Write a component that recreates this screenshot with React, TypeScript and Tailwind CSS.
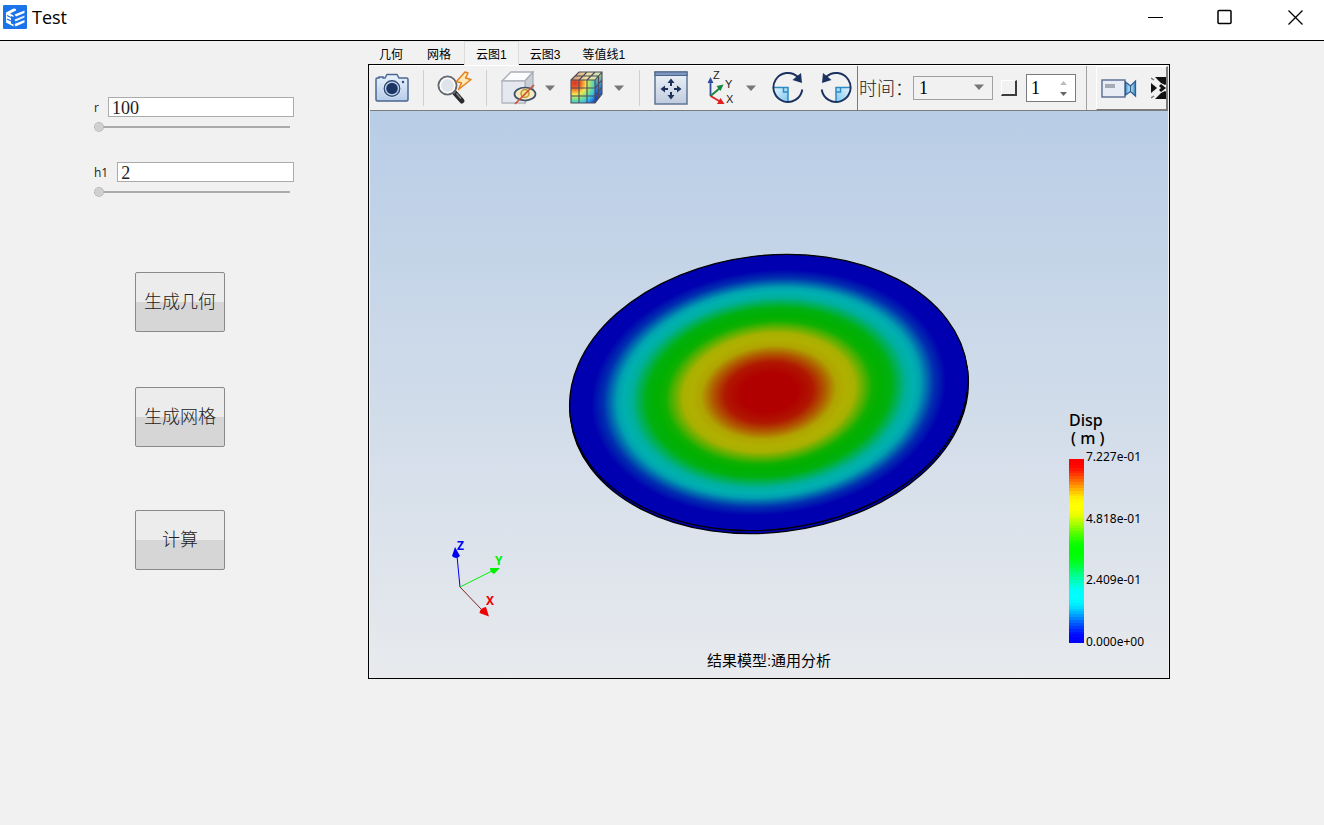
import React from 'react';

const tabs = ['几何', '网格', '云图1', '云图3', '等值线1'];

const legendLabels = ['7.227e-01', '4.818e-01', '2.409e-01', '0.000e+00'];

const AppLogo = () => (
  <svg width="24" height="24" viewBox="0 0 24 24" fill="none">
    <rect width="24" height="24" rx="1" fill="#1a73e8" />
    <path d="M3 7.500 10.500 3.500 13 4V5.500L7 8.500 10.500 10.500V12L8 11V18.500L10.500 19.500V21.500L3 17.500Z" fill="#fff" />
    <path d="M4 10.500 8 12.500M4 14 8 16" stroke="#1a73e8" strokeWidth="1.300" />
    <path d="M11.500 9.500 21.500 5.500V8L13 11.500Z" fill="#fff" />
    <path d="M11.500 14.500 21.500 10.500V12.500L12.500 16.500Z" fill="#e6effc" />
    <path d="M11.500 19 21.500 15V17.500L12.500 21.500Z" fill="#fff" />
  </svg>
);

const CameraIcon = () => (
  <svg width="34" height="30" viewBox="0 0 34 30">
    <defs>
      <linearGradient id="cam" x1="0" y1="0" x2="0" y2="1">
        <stop offset="0" stopColor="#e9f3fd" />
        <stop offset="1" stopColor="#b5cce8" />
      </linearGradient>
    </defs>
    <path d="M2 5H4V4H8V5H10L12 1.500H22L24 5H31.500Q33 5 33 6.500V26.500Q33 28 31.500 28H2.500Q1 28 1 26.500V6.500Q1 5 2 5Z" fill="url(#cam)" stroke="#4b6791" strokeWidth="1.500" />
    <circle cx="17" cy="15.500" r="9" fill="#f4f9ff" />
    <circle cx="17" cy="15.500" r="7.800" fill="#c7daf0" stroke="#2f4b76" strokeWidth="1.400" />
    <circle cx="17" cy="15.500" r="5.800" fill="#1c3562" />
    <circle cx="28" cy="9" r="1.200" fill="#2f4b76" />
  </svg>
);

const QuickFindIcon = () => (
  <svg width="36" height="34" viewBox="0 0 36 34">
    <path d="M17 21 25 30" stroke="#2b2b2e" strokeWidth="5" strokeLinecap="round" />
    <path d="M19.500 22.500 24 27.500" stroke="#8d9095" strokeWidth="1.200" />
    <path d="M15 19 18 22" stroke="#77797d" strokeWidth="2.500" />
    <circle cx="10.500" cy="14.500" r="9" fill="#dfe4ea" stroke="#65686d" strokeWidth="2" />
    <circle cx="10.500" cy="14.500" r="7.200" fill="none" stroke="#fbfcfe" strokeWidth="1.500" />
    <path d="M28 1 19.500 10.500 24.500 12 21.500 18.500 34 8.500 28.500 7 31 2Z" fill="#fde9b5" stroke="#e5811d" strokeWidth="1.500" strokeLinejoin="round" />
  </svg>
);

const HiddenCubeIcon = () => (
  <svg width="36" height="34" viewBox="0 0 36 34">
    <path d="M1 10 10 1H32L24 10Z" fill="#fbfcfe" stroke="#a9adb6" strokeWidth="1.300" />
    <path d="M24 10 32 1V22L24 32Z" fill="#c9cdd6" stroke="#a9adb6" strokeWidth="1.300" />
    <path d="M1 10H24V32H1Z" fill="#e5e8ee" stroke="#b1b5be" strokeWidth="1.300" />
    <ellipse cx="24" cy="23" rx="10.500" ry="6.500" fill="#f7e9bd" stroke="#3c4f6d" strokeWidth="1.700" />
    <circle cx="24" cy="22.500" r="4" fill="#f5df8e" stroke="#bc9638" strokeWidth="1.500" />
    <path d="M14 33 33 14" stroke="#cf4a2c" strokeWidth="1.600" />
  </svg>
);

const ContourCubeIcon = () => (
  <svg width="34" height="34" viewBox="0 0 34 34">
    <defs>
      <radialGradient id="front" gradientUnits="userSpaceOnUse" cx="5" cy="12" r="27">
        <stop offset="0" stopColor="#d93226" />
        <stop offset=".22" stopColor="#f16a27" />
        <stop offset=".42" stopColor="#f4e84b" />
        <stop offset=".62" stopColor="#74df93" />
        <stop offset=".78" stopColor="#36bfea" />
        <stop offset="1" stopColor="#1647d8" />
      </radialGradient>
      <linearGradient id="side" x1="0" y1="0" x2="0" y2="1">
        <stop offset="0" stopColor="#a9d86c" />
        <stop offset=".5" stopColor="#2c7ed8" />
        <stop offset="1" stopColor="#102fae" />
      </linearGradient>
      <linearGradient id="lid" x1="0" y1="0" x2="1" y2="0">
        <stop offset="0" stopColor="#d98a6a" />
        <stop offset=".5" stopColor="#ede0a0" />
        <stop offset="1" stopColor="#c4e2b4" />
      </linearGradient>
    </defs>
    <path d="M1 9 9 1H32L25 9Z" fill="url(#lid)" />
    <path d="M25 9 32 1V23L25 32Z" fill="url(#side)" />
    <path d="M1 9H25V32H1Z" fill="url(#front)" />
    <path
      d="M1 9 9 1H32V23L25 32H1ZM1 9H25V32M25 9 32 1M9 9V32M17 9V32M1 17H25L32 9M1 25H25L32 16M9 9 17 1M17 9 25 1M5 5H28.500V27.500"
      fill="none"
      stroke="#4c4c5c"
      strokeWidth="1.100"
    />
  </svg>
);

const FitIcon = () => (
  <svg width="34" height="34" viewBox="0 0 34 34">
    <defs>
      <linearGradient id="fit" x1="0" y1="0" x2="0" y2="1">
        <stop offset="0" stopColor="#eef2f8" />
        <stop offset="1" stopColor="#bfcbde" />
      </linearGradient>
    </defs>
    <rect x="1" y="1" width="32" height="32" fill="url(#fit)" stroke="#5f7493" strokeWidth="1.500" />
    <rect x="1" y="1" width="32" height="3.500" fill="#7d97c0" stroke="#4d648c" />
    <path d="M17 9V15M17 21V27M8 18H14M20 18H26" stroke="#1c3058" strokeWidth="2" />
    <path d="M17 7.500 13.500 12H20.500ZM17 28.500 13.500 24H20.500ZM6.500 18 11 14.500V21.500ZM27.500 18 23 14.500V21.500Z" fill="#1c3058" />
  </svg>
);

const AxesIcon = () => (
  <svg width="30" height="36" viewBox="0 0 30 36" className="overflow-visible">
    <path d="M4.500 26V10" stroke="#2e4fa0" strokeWidth="1.800" />
    <path d="M4.500 7 1.500 13H7.500Z" fill="#2e4fa0" />
    <path d="M4.500 26 14 18" stroke="#16863c" strokeWidth="1.800" />
    <path d="M17.500 14.500 10.500 16 14.500 21Z" fill="#16863c" />
    <path d="M4.500 26 14 31.500" stroke="#e31e1e" strokeWidth="1.800" />
    <path d="M18.500 34 14.500 28 11 34Z" fill="#e31e1e" />
    <g className="font-['Liberation_Sans'] text-[11px]" fill="#222">
      <text x="7" y="9">Z</text>
      <text x="19" y="18">Y</text>
      <text x="20" y="33">X</text>
    </g>
  </svg>
);

const RotateIcon = ({ flip = false }: { flip?: boolean }) => (
  <svg width="32" height="34" viewBox="0 0 32 34">
    <defs>
      <linearGradient id="quad" x1="0" y1="0" x2="1" y2="1">
        <stop offset="0" stopColor="#e6f6fe" />
        <stop offset="1" stopColor="#7cc6ee" />
      </linearGradient>
    </defs>
    <g transform={flip ? 'translate(32 0) scale(-1 1)' : undefined}>
      <path d="M1.500 16.500H16V31A14.500 14.500 0 0 1 1.500 16.500Z" fill="url(#quad)" />
      <path d="M1.500 16.500H16V31M11.500 17V21H16" fill="none" stroke="#2c8bc4" strokeWidth="1.500" />
      <path d="M26 6A14.500 14.500 0 1 0 30.300 18.500" fill="none" stroke="#1b315f" strokeWidth="1.900" />
      <path d="M29 2 30 12 20.500 9Z" fill="#1b315f" />
    </g>
  </svg>
);

const VideoIcon = () => (
  <svg width="36" height="20" viewBox="0 0 36 20">
    <defs>
      <linearGradient id="lens" x1="0" y1="0" x2="1" y2="0">
        <stop offset="0" stopColor="#4b9bd0" />
        <stop offset=".5" stopColor="#d8f0fc" />
        <stop offset="1" stopColor="#3181bd" />
      </linearGradient>
    </defs>
    <rect x="1" y="2" width="23" height="17" fill="#e8ecf4" stroke="#566b91" strokeWidth="1.400" />
    <rect x="4" y="6" width="10" height="4" fill="#a3abb7" />
    <path d="M24.500 4 29.500 8 34.500 3V18L29.500 13.500 24.500 17Z" fill="url(#lens)" stroke="#2b5f95" strokeWidth="1.300" />
    <path d="M29.500 8V13.500" stroke="#2b5f95" strokeWidth="1.300" />
  </svg>
);

const PlayIcon = () => (
  <svg width="20" height="22" viewBox="0 0 20 22">
    <path d="M0 6 6 11 0 16Z" fill="#111" />
    <path d="M4 0H20V4L14 8 10 6ZM4 22H20V18L14 14 10 16Z" fill="#111" />
    <path d="M10 7 15 11 10 15 8 13 10 11 8 9Z" fill="#111" />
    <path d="M0 1 3 3M0 21 3 19" stroke="#777" strokeWidth="1.500" />
  </svg>
);

const Caret = () => (
  <svg width="10" height="6" viewBox="0 0 10 6">
    <path d="M0 0.500H10L5 6Z" fill="#777" />
  </svg>
);

type ToolProps = { label: string; className?: string; children: React.ReactNode };

const Tool = ({ label, className = '', children }: ToolProps) => (
  <button type="button" aria-label={label} className={`flex h-9 shrink-0 items-center justify-center ${className}`}>
    {children}
  </button>
);

const Divider = ({ className = '' }: { className?: string }) => (
  <div className={`h-9 w-px shrink-0 bg-[#d0d0d0] ${className}`} />
);

const Toolbar = () => (
  <div className="flex h-[46px] items-center overflow-hidden border-t border-b border-t-white border-b-[#7b7b7b] bg-[#f1f1f1] pl-[5px]">
    <Tool label="截图"><CameraIcon /></Tool>
    <Divider className="mr-[13px] ml-[14px]" />
    <Tool label="快速查询"><QuickFindIcon /></Tool>
    <Divider className="mr-[14px] ml-[13px]" />
    <Tool label="隐藏"><HiddenCubeIcon /></Tool>
    <Tool label="隐藏选项" className="ml-2"><Caret /></Tool>
    <Tool label="云图" className="ml-[15px]"><ContourCubeIcon /></Tool>
    <Tool label="云图选项" className="ml-[10px]"><Caret /></Tool>
    <Divider className="ml-[15px]" />
    <Tool label="适应窗口" className="ml-[14px]"><FitIcon /></Tool>
    <Tool label="视角" className="ml-[18px]"><AxesIcon /></Tool>
    <Tool label="视角选项" className="ml-[10px]"><Caret /></Tool>
    <Tool label="顺时针旋转" className="ml-4"><RotateIcon /></Tool>
    <Tool label="逆时针旋转" className="ml-4"><RotateIcon flip /></Tool>
    <div className="ml-[5px] h-full w-px shrink-0 bg-[#7b7b7b]" />

    <label htmlFor="time" className="w-[55px] shrink-0 overflow-hidden pt-0.5 pl-px text-lg leading-6 font-light whitespace-nowrap text-[#222]">
      时间：
    </label>
    <div className="relative shrink-0">
      <select
        id="time"
        defaultValue="1"
        className="block h-6 w-20 appearance-none border border-[#a0a0a0] bg-[#f1f1f1] pl-[5px] font-['Liberation_Serif',serif] text-lg leading-5 text-black"
      >
        <option value="1">1</option>
      </select>
      <span className="pointer-events-none absolute top-2 right-[9px]"><Caret /></span>
    </div>
    <input
      type="checkbox"
      aria-label="循环"
      className="ml-2 size-4 shrink-0 appearance-none border-t border-r-2 border-b-2 border-l border-t-white border-r-[#3c3c3c] border-b-[#3c3c3c] border-l-white bg-[#f1f1f1]"
    />
    <div className="ml-[9px] flex h-7 w-[50px] shrink-0 items-center border border-[#7b7b7b] bg-white">
      <input
        type="number"
        aria-label="步长"
        defaultValue={1}
        className="w-8 min-w-0 appearance-none bg-transparent pl-1 font-['Liberation_Serif',serif] text-lg leading-6 text-black outline-none [&::-webkit-inner-spin-button]:appearance-none"
      />
      <div className="flex flex-col gap-[7px]">
        <button type="button" aria-label="增加">
          <svg width="9" height="4" viewBox="0 0 7 4" className="block"><path d="M3.500 0 7 4H0Z" fill="#bdbdbd" /></svg>
        </button>
        <button type="button" aria-label="减少">
          <svg width="9" height="4" viewBox="0 0 7 4" className="block"><path d="M0 0H7L3.500 4Z" fill="#666" /></svg>
        </button>
      </div>
    </div>
    <div className="ml-[10px] h-full w-px shrink-0 bg-[#a0a0a0]" />
    <div className="ml-[9px] flex h-full min-w-0 flex-1 items-center overflow-hidden border-t border-r-2 border-b border-l border-t-white border-r-[#7b7b7b] border-b-[#7b7b7b] border-l-white pl-1">
      <Tool label="录像"><VideoIcon /></Tool>
      <Tool label="播放" className="ml-[14px]"><PlayIcon /></Tool>
    </div>
  </div>
);

const Disc = () => (
  <svg width="404" height="284" viewBox="-202 -142 404 284" className="absolute top-[141px] left-1/2 -translate-x-1/2">
    <defs>
      <radialGradient id="disp">
        <stop offset="0" stopColor="#b00000" />
        <stop offset=".14" stopColor="#b00000" />
        <stop offset=".22" stopColor="#b01800" />
        <stop offset=".28" stopColor="#b05800" />
        <stop offset=".34" stopColor="#b0a400" />
        <stop offset=".39" stopColor="#b0b000" />
        <stop offset=".43" stopColor="#a8b000" />
        <stop offset=".52" stopColor="#10b000" />
        <stop offset=".56" stopColor="#00b000" />
        <stop offset=".61" stopColor="#00b010" />
        <stop offset=".69" stopColor="#00b09c" />
        <stop offset=".73" stopColor="#00b0b0" />
        <stop offset=".76" stopColor="#00a0b0" />
        <stop offset=".83" stopColor="#0030b0" />
        <stop offset=".89" stopColor="#0000b0" />
        <stop offset="1" stopColor="#0000b0" />
      </radialGradient>
    </defs>
    <g stroke="#000" strokeWidth="1.300">
      <ellipse rx="200" ry="137" cy="1.500" transform="rotate(-7)" fill="#0000b0" />
      <ellipse rx="200" ry="137" cy="-1.500" transform="rotate(-7)" fill="url(#disp)" />
    </g>
  </svg>
);

const Triad = () => (
  <svg width="70" height="90" viewBox="450 530 70 90" className="absolute bottom-[58px] left-20 overflow-visible">
    <path d="M460 587 457 556" stroke="#0000f0" />
    <path d="M455 547 452 556 Q456 560 460 556Z" fill="#0000f0" />
    <path d="M460 587 492 571" stroke="#00f000" />
    <path d="M500 568 490 568 Q490 572 494 574Z" fill="#00f000" />
    <path d="M460 587 482 610" stroke="#802020" />
    <path d="M489 616.500 486 607 Q480 608 479.500 613Z" fill="#f00000" />
    <g className="font-['Noto_Sans'] text-xs font-bold">
      <text x="457" y="550" fill="#0000f0">Z</text>
      <text x="495" y="565" fill="#00f000">Y</text>
      <text x="486" y="605" fill="#f00000">X</text>
    </g>
  </svg>
);

const BANDS = 64;
const stops = [
  [255, 0, 0],
  [255, 255, 0],
  [0, 255, 0],
  [0, 255, 255],
  [0, 0, 255],
];

const bandColor = (i: number) => {
  const pos = (i / (BANDS - 1)) * (stops.length - 1);
  const k = Math.min(Math.floor(pos), stops.length - 2);
  const t = (1 - Math.cos((pos - k) * Math.PI)) / 2;
  const mix = stops[k].map((c, n) => Math.round(c + (stops[k + 1][n] - c) * t));
  return `rgb(${mix.join(',')})`;
};

const Legend = () => (
  <div className="absolute right-4 bottom-[30px] w-[83px] font-['Noto_Sans','Noto_Sans_CJK_SC',sans-serif] text-black">
    <div className="text-base leading-[18px] font-medium">Disp</div>
    <div className="pl-0.5 text-base leading-[18px] font-medium whitespace-nowrap">( m )</div>
    <div className="mt-1 flex gap-[2px]">
      <svg width="15" height="184" viewBox={`0 0 15 ${BANDS}`} preserveAspectRatio="none" shapeRendering="crispEdges" className="mt-2 mb-[5px]">
        {Array.from({ length: BANDS }, (_, i) => (
          <rect key={i} y={i} width="15" height="1" fill={bandColor(i)} />
        ))}
      </svg>
      <div className="flex flex-col justify-between text-xs leading-3">
        {legendLabels.map((label) => (
          <span key={label}>{label}</span>
        ))}
      </div>
    </div>
  </div>
);

const tabClass = (tab: string, active: boolean) => {
  if (active) return 'relative z-10 h-6 border border-b-0 border-[#dcdcdc] bg-[#f3f3f3] px-[11px] pt-0.5';
  return tab.length === 2 ? 'h-6 w-12 pt-[3px] pl-[11px] text-left' : 'h-6 px-[11px] pt-[3px]';
};

const Viewer = () => (
  <section className="mr-[154px] min-w-0 flex-1">
    <div role="tablist" className="flex h-[23px] text-xs leading-4">
      {tabs.map((tab, i) => (
        <button key={tab} type="button" role="tab" aria-selected={i === 2} className={tabClass(tab, i === 2)}>
          {tab}
        </button>
      ))}
    </div>
    <div className="border border-black bg-[#f1f1f1] px-px">
      <Toolbar />
      <div className="relative h-[567px] overflow-hidden bg-linear-to-b from-[#b8cde6] to-[#e8eaed]">
        <Disc />
        <Triad />
        <Legend />
        <p className="absolute bottom-[7px] left-0 w-full text-center text-[15px] leading-5 text-black">结果模型:通用分析</p>
      </div>
    </div>
  </section>
);

type FieldProps = { id: string; value: string; className?: string };

const Field = ({ id, value, className = '' }: FieldProps) => (
  <div className={`w-[200px] ${className}`}>
    <div className="flex h-5 items-center gap-[9px]">
      <label htmlFor={id} className="pt-0.5 font-['Open_Sans',sans-serif] text-xs leading-5 text-[#222]">{id}</label>
      <input
        id={id}
        type="text"
        defaultValue={value}
        className="h-5 min-w-0 flex-1 border border-[#ababab] bg-white pt-0.5 pl-[3px] font-['Liberation_Serif',serif] text-lg leading-4 text-[#222] outline-none"
      />
    </div>
    <input
      type="range"
      aria-label={`${id} 滑块`}
      min={0}
      max={100}
      defaultValue={0}
      className="mt-1 block h-[11px] w-[196px] appearance-none bg-transparent [&::-webkit-slider-runnable-track]:h-[2px] [&::-webkit-slider-runnable-track]:bg-[#ababab] [&::-webkit-slider-thumb]:-mt-1 [&::-webkit-slider-thumb]:size-[10px] [&::-webkit-slider-thumb]:appearance-none [&::-webkit-slider-thumb]:rounded-full [&::-webkit-slider-thumb]:border [&::-webkit-slider-thumb]:border-dotted [&::-webkit-slider-thumb]:border-[#ababab] [&::-webkit-slider-thumb]:bg-[#d0d0d0]"
    />
  </div>
);

const ActionButton = ({ children, className = '' }: { children: string; className?: string }) => (
  <button
    type="button"
    className={`ml-[41px] block h-[60px] w-[90px] rounded-[2px] border border-[#8a8a8a] bg-linear-to-b from-[#ececec] from-50% to-[#d6d6d6] to-50% text-lg leading-6 font-light text-[#222] ${className}`}
  >
    {children}
  </button>
);

export default function App() {
  return (
    <div className="min-h-screen bg-[#f1f1f1] font-['Liberation_Sans','Noto_Sans_CJK_SC',sans-serif] text-black">
      <header className="flex h-[41px] items-center border-b border-black bg-white pb-[6px] pl-[3px]">
        <AppLogo />
        <h1 className="ml-[5px] font-['Open_Sans',sans-serif] text-lg leading-6">Test</h1>
        <div className="ml-auto flex items-center pr-5">
          <button type="button" aria-label="最小化" className="mr-[52px]">
            <svg width="17" height="16" viewBox="0 0 17 16" className="block"><path d="M0 8.500H15" stroke="#000" /></svg>
          </button>
          <button type="button" aria-label="最大化" className="mr-[55px]">
            <svg width="16" height="16" viewBox="0 0 16 16" className="block"><rect x="1" y="1.500" width="13" height="13" rx="1" fill="none" stroke="#000" strokeWidth="1.500" /></svg>
          </button>
          <button type="button" aria-label="关闭">
            <svg width="16" height="16" viewBox="0 0 16 16" className="block"><path d="M0.500 1.500 14.500 15.500M14.500 1.500 0.500 15.500" stroke="#000" strokeWidth="1.300" /></svg>
          </button>
        </div>
      </header>

      <main className="flex">
        <aside className="w-[368px] shrink-0 pt-14 pl-[94px]">
          <Field id="r" value="100" />
          <Field id="h1" value="2" className="mt-[30px]" />
          <ActionButton className="mt-[75px]">生成几何</ActionButton>
          <ActionButton className="mt-[55px]">生成网格</ActionButton>
          <ActionButton className="mt-[63px]">计算</ActionButton>
        </aside>
        <Viewer />
      </main>
    </div>
  );
}
